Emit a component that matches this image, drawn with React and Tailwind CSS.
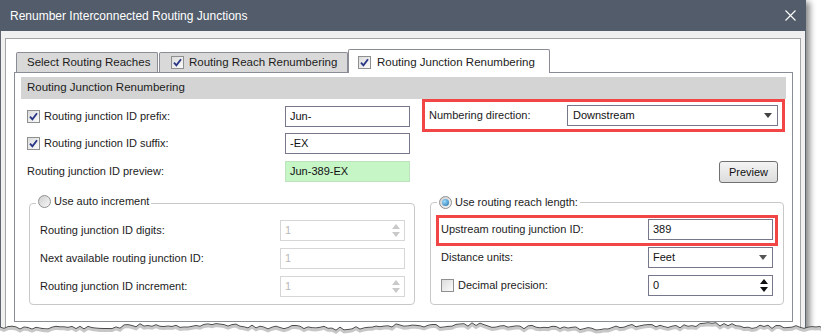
import React from 'react';

// torn paper edge along the bottom of the screenshot
const TEAR = (() => {
    const pts = [];
    let s = 11;
    for (let x = 0; x <= 824; x += 4) {
        s = (s * 9301 + 49297) % 233280;
        const r = s / 233280;
        const y = 7.5 + Math.sin(x / 41) * 1.4 + Math.sin(x / 13) * 0.9 + (r - 0.5) * 3.6;
        pts.push(`${x},${y.toFixed(1)}`);
    }
    return pts.join(' ');
})();

function Check({ checked }) {
    return (
        <span className="w-[13px] h-[13px] shrink-0 border border-[#8e8f8f] bg-linear-to-br from-[#dcdcdc] to-[#fbfbfb] flex items-center justify-center">
            {checked && (
                <svg width="9" height="9" viewBox="0 0 9 9">
                    <path d="M1 4.6 L3.4 7.4 L8 1.2" stroke="#283585" strokeWidth="1.8" fill="none" />
                </svg>
            )}
        </span>
    );
}

function Radio({ on }) {
    return (
        <span className="w-[13px] h-[13px] shrink-0 rounded-full border border-[#8f8f8f] bg-linear-to-br from-[#cfcfcf] to-[#f8f8f8] flex items-center justify-center">
            {on && <span className="w-[7px] h-[7px] rounded-full bg-[radial-gradient(circle_at_35%_35%,#9ddcff,#1b6ea8)]" />}
        </span>
    );
}

function Arrow({ color = '#444' }) {
    return (
        <svg width="8" height="5" viewBox="0 0 8 5" className="ml-auto mr-[5px]">
            <path d="M0 0 H8 L4 5 Z" fill={color} />
        </svg>
    );
}

function Spin({ color }) {
    return (
        <span className="ml-auto mr-[4px] flex flex-col gap-[3px]">
            <svg width="8" height="5" viewBox="0 0 8 5"><path d="M0 5 H8 L4 0 Z" fill={color} /></svg>
            <svg width="8" height="5" viewBox="0 0 8 5"><path d="M0 0 H8 L4 5 Z" fill={color} /></svg>
        </span>
    );
}

function Box({ children, disabled, className = '' }) {
    return (
        <div
            className={`w-[125px] h-[21px] shrink-0 ml-auto border bg-white pl-[4px] flex items-center ${
                disabled ? 'border-[#d6d6d6] text-[#b9b9b9]' : 'border-[#77778c] text-[#111]'
            } ${className}`}
        >
            {children}
        </div>
    );
}

export default function App() {
    return (
        <div className="w-[821px] h-[335px] bg-white relative overflow-hidden font-['Liberation_Sans',Arial,sans-serif] text-[11px] text-[#1c1c1c]">
            <div className="w-[806px] h-[335px] flex flex-col shadow-[4px_2px_6px_rgba(0,0,0,0.45)]">
                {/* title bar */}
                <div className="h-[31px] shrink-0 bg-[#525c6a] flex items-center justify-between pl-[10px] pr-[10px] text-white text-[12px]">
                    <span>Renumber Interconnected Routing Junctions</span>
                    <svg width="11" height="11" viewBox="0 0 11 11">
                        <path d="M0.5 0.5 L10.5 10.5 M10.5 0.5 L0.5 10.5" stroke="#fff" strokeWidth="1.1" />
                    </svg>
                </div>

                <div className="flex-1 bg-[#f0f0f0] border-x border-[#5e6570] px-[4px] pt-[7px]">
                    <div className="h-full border border-[#a5a5a5] bg-white pt-[10px] pl-[8px] pr-[7px]">
                        {/* tabs */}
                        <div className="flex items-end h-[23px] pl-[2px] text-[11.5px]">
                            <div className="w-[142px] h-[20px] border border-b-0 border-[#8b8d96] rounded-t-[2px] bg-[#d9d9d9] flex items-center pl-[10px]">
                                Select Routing Reaches
                            </div>
                            <div className="w-[189px] h-[20px] ml-[1px] border border-b-0 border-[#8b8d96] rounded-t-[2px] bg-[#d9d9d9] flex items-center pl-[11px] gap-[5px]">
                                <Check checked />
                                Routing Reach Renumbering
                            </div>
                            <div className="relative z-10 -mb-[1px] w-[202px] h-[24px] border border-b-0 border-[#8b8d96] rounded-t-[2px] bg-white flex items-center pt-[2px] pl-[9px] gap-[6px]">
                                <Check checked />
                                Routing Junction Renumbering
                            </div>
                        </div>

                        {/* tab panel */}
                        <div className="w-[779px] h-[250px] border border-[#8b8d96] bg-white px-[6px] pt-[4px]">
                            <div className="h-[22px] bg-[#d4d4d4] flex items-center pl-[6px] text-[11.5px]">
                                Routing Junction Renumbering
                            </div>

                            <div className="grid grid-cols-[389px_363px] gap-x-[12px] items-start">
                                <div className="pt-[7px] pl-[6px] flex flex-col gap-[6px]">
                                    <div className="flex items-center h-[21px] gap-[4px]">
                                        <Check checked />
                                        <span>Routing junction ID prefix:</span>
                                        <Box>Jun-</Box>
                                    </div>
                                    <div className="flex items-center h-[21px] gap-[4px]">
                                        <Check checked />
                                        <span>Routing junction ID suffix:</span>
                                        <Box>-EX</Box>
                                    </div>
                                    <div className="flex items-center h-[21px] mt-[1px]">
                                        <span>Routing junction ID preview:</span>
                                        <Box className="!bg-[#c6f5c6] !border-[#bde3bd]">Jun-389-EX</Box>
                                    </div>
                                </div>

                                <div className="flex flex-col">
                                    <div className="h-[33px] border-[3px] border-[#f24545] flex items-center pl-[4px] pr-[4px]">
                                        <span>Numbering direction:</span>
                                        <div className="w-[211px] h-[21px] ml-auto border border-[#77778c] bg-white pl-[5px] flex items-center text-[#111]">
                                            Downstream
                                            <Arrow />
                                        </div>
                                    </div>
                                    <button className="self-end mr-[7px] mt-[29px] w-[59px] h-[22px] border border-[#707070] rounded-[3px] bg-linear-to-b from-[#f4f4f4] to-[#dcdcdc] text-[11px] text-[#111]">
                                        Preview
                                    </button>
                                </div>
                            </div>

                            {/* group boxes */}
                            <div className="flex gap-[15px] ml-[8px] mt-[11px]">
                                <fieldset className="w-[386px] border border-[#c8c8c8] rounded-[4px] pl-[10px] pr-[9px] pt-[8px] pb-[7px]">
                                    <legend className="ml-[-4px] px-[2px]">
                                        <span className="inline-flex items-center gap-[3px] h-[14px]">
                                            <Radio />
                                            Use auto increment
                                        </span>
                                    </legend>
                                    <div className="flex flex-col gap-[7px]">
                                        <div className="flex items-center h-[21px]">
                                            <span>Routing junction ID digits:</span>
                                            <Box disabled>
                                                1
                                                <Spin color="#c9c9c9" />
                                            </Box>
                                        </div>
                                        <div className="flex items-center h-[21px]">
                                            <span>Next available routing junction ID:</span>
                                            <Box disabled>1</Box>
                                        </div>
                                        <div className="flex items-center h-[21px]">
                                            <span>Routing junction ID increment:</span>
                                            <Box disabled>
                                                1
                                                <Spin color="#c9c9c9" />
                                            </Box>
                                        </div>
                                    </div>
                                </fieldset>

                                <fieldset className="w-[354px] border border-[#c8c8c8] rounded-[4px] pl-[10px] pr-[10px] pt-[8px] pb-[7px]">
                                    <legend className="ml-[-4px] px-[2px]">
                                        <span className="inline-flex items-center gap-[3px] h-[14px]">
                                            <Radio on />
                                            Use routing reach length:
                                        </span>
                                    </legend>
                                    <div className="flex flex-col gap-[7px]">
                                        <div className="-mx-[5px] -mt-[4px] -mb-[6px] border-[3px] border-[#f24545] px-[2px] pt-[1px] pb-[3px]">
                                            <div className="flex items-center h-[21px]">
                                                <span>Upstream routing junction ID:</span>
                                                <Box>389</Box>
                                            </div>
                                        </div>
                                        <div className="flex items-center h-[21px]">
                                            <span>Distance units:</span>
                                            <Box>
                                                Feet
                                                <Arrow color="#555" />
                                            </Box>
                                        </div>
                                        <div className="flex items-center h-[21px] gap-[4px]">
                                            <Check />
                                            <span>Decimal precision:</span>
                                            <Box>
                                                0
                                                <Spin color="#111" />
                                            </Box>
                                        </div>
                                    </div>
                                </fieldset>
                            </div>
                        </div>
                    </div>
                </div>
            </div>

            <svg width="821" height="16" viewBox="0 0 821 16" className="absolute left-0 bottom-0">
                <polygon points={`${TEAR} 824,16 0,16`} fill="#fff" />
                <polyline points={TEAR} transform="translate(0 2)" fill="none" stroke="rgba(0,0,0,0.22)" strokeWidth="3" />
                <polyline points={TEAR} fill="none" stroke="#4a4a4a" strokeWidth="1" />
            </svg>
        </div>
    );
}
